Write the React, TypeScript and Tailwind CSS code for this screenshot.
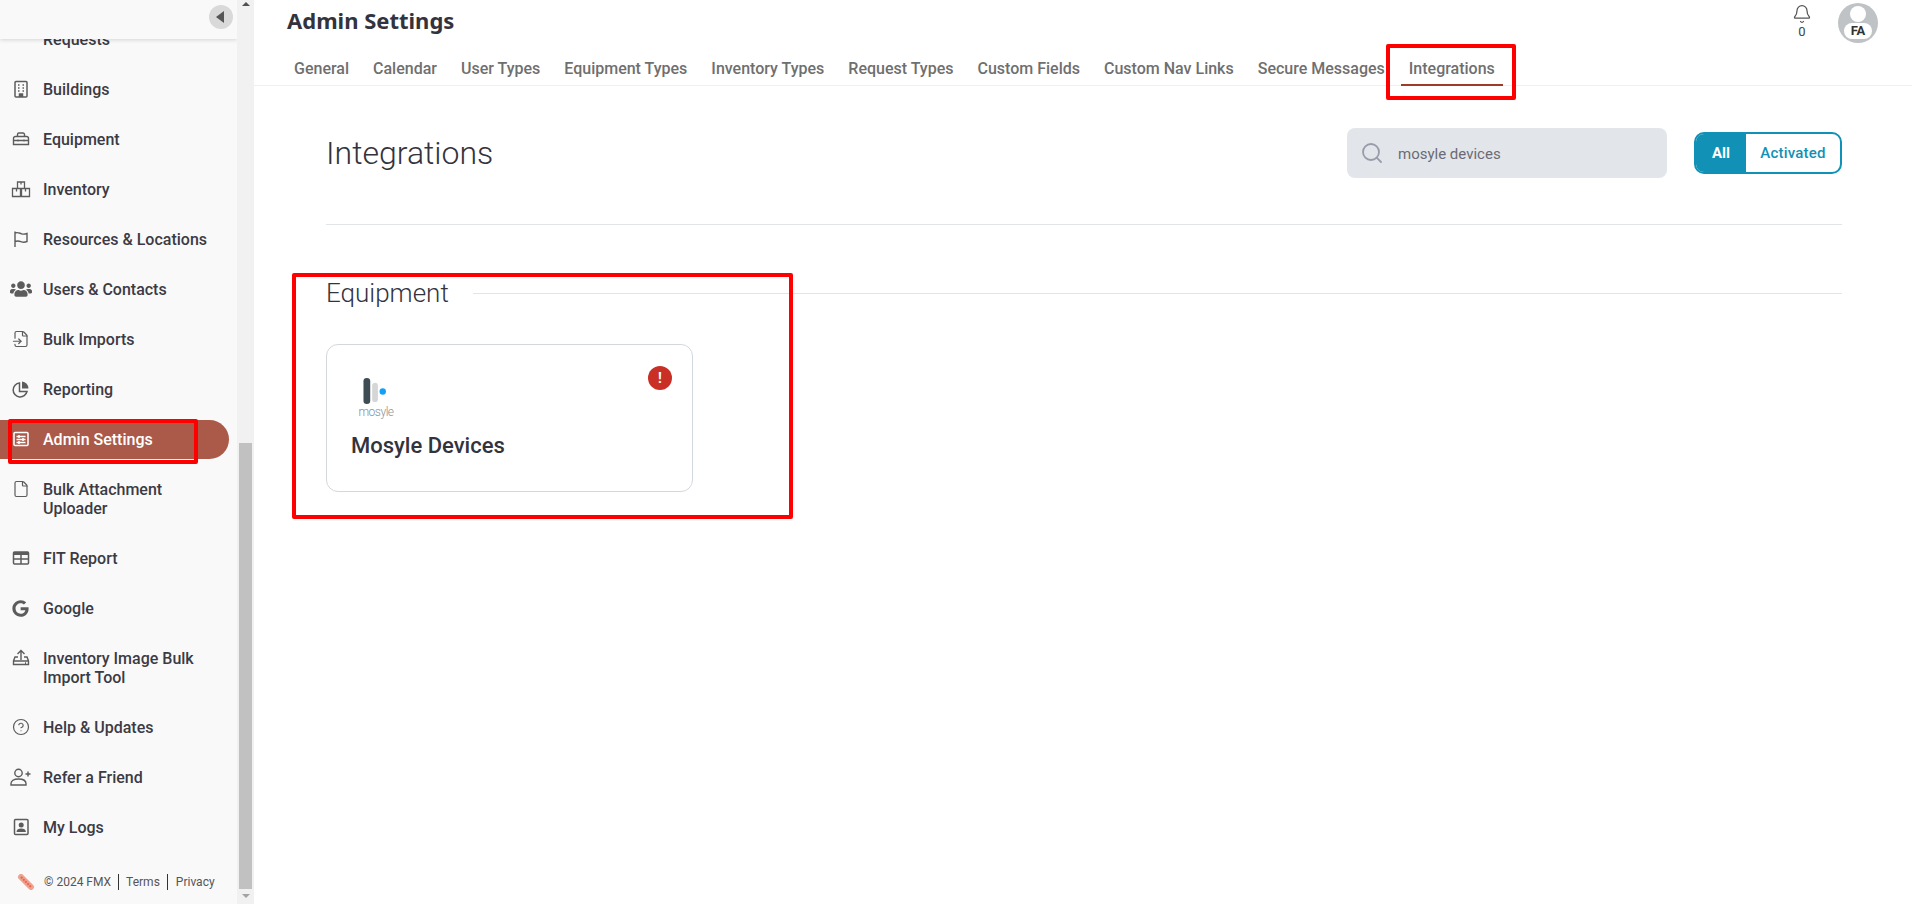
import { Bell, CircleHelp, File, FileInput, Search } from 'lucide-react'
import { FaGoogle, FaUsers } from 'react-icons/fa'
import type { ReactNode } from 'react'

const iconClass = 'h-[18px] w-[18px]'

function BuildingIcon() {
  return (
    <svg viewBox="0 0 18 18" fill="none" stroke="currentColor" strokeWidth="1.5" className={iconClass}>
      <rect x="3" y="1.500" width="12" height="15.500" rx="1" />
      <path d="M6 5h1.500M10.500 5H12M6 8h1.500M10.500 8H12M6 11h1.500M10.500 11H12" strokeWidth="1.600" />
      <path d="M7.500 17v-3h3v3" fill="currentColor" />
    </svg>
  )
}

function Toolbox() {
  return (
    <svg viewBox="0 0 18 18" fill="none" stroke="currentColor" strokeWidth="1.4" className={iconClass}>
      <path d="M1.500 8.500a2 2 0 0 1 2-2h11a2 2 0 0 1 2 2v6h-15z" />
      <path d="M5.500 6.500V4.500A1.500 1.500 0 0 1 7 3h4a1.500 1.500 0 0 1 1.500 1.500v2M1.500 10.500h15M6 9.500v2M12 9.500v2" />
    </svg>
  )
}

function Boxes() {
  return (
    <svg viewBox="0 0 20 20" fill="none" stroke="currentColor" strokeWidth="1.300" className="h-5 w-5">
      <path d="M6.500 9V3h7v6M10 3v2.500" />
      <path d="M1.500 9.500h8v8h-8zM10.500 9.500h8v8h-8zM5.500 9.500v3M14.500 9.500v3" />
    </svg>
  )
}

function FlagIcon() {
  return (
    <svg viewBox="0 0 18 18" fill="none" stroke="currentColor" strokeWidth="1.400" className={iconClass}>
      <path d="M3 1.500V17M3 3c3-1 4 0 6.500.8 2 .6 3.500.3 5.500-.3v8c-2 .8-3.500 1-5.500.3C7 11 6 10.500 3 11.500" />
    </svg>
  )
}

function PieIcon() {
  return (
    <svg viewBox="0 0 18 18" fill="none" stroke="currentColor" strokeWidth="1.500" className={iconClass}>
      <path d="M7.500 3a7 7 0 1 0 7.500 8.500H7.500z" />
      <path d="M10 1.500a7 7 0 0 1 6.500 7H10z" fill="currentColor" stroke="none" />
    </svg>
  )
}

function Sliders() {
  return (
    <svg viewBox="0 0 18 18" fill="none" stroke="currentColor" strokeWidth="1.500" className={iconClass}>
      <rect x="2" y="2.500" width="14" height="13" rx="1" />
      <path d="M4.500 6.500h9M4.500 9.500h9M4.500 12.500h9M7 5v3M11 8v3M7 11v3" />
    </svg>
  )
}

function TableIcon() {
  return (
    <svg viewBox="0 0 18 18" fill="none" stroke="currentColor" strokeWidth="1.500" className={iconClass}>
      <rect x="1.500" y="3" width="15" height="12" rx="1" />
      <path d="M1.500 4.500h15" strokeWidth="3" />
      <path d="M1.500 10h15M9 6v9" />
    </svg>
  )
}

function TrayUpload() {
  return (
    <svg viewBox="0 0 18 18" fill="none" stroke="currentColor" strokeWidth="1.400" className={iconClass}>
      <path d="M9 11V2M5.500 5 9 1.500 12.500 5" />
      <path d="M6 8H3L1.500 12v3.500h15V12L15 8h-3M1.500 12h15M13 14h1" />
    </svg>
  )
}

function ReferIcon() {
  return (
    <svg viewBox="0 0 22 18" fill="none" stroke="currentColor" strokeWidth="1.400" className="h-[18px] w-[22px]">
      <circle cx="8.500" cy="5" r="3.700" />
      <path d="M1 17v-1.500c0-2.500 2.500-4.500 7.500-4.500s7.500 2 7.500 4.500V17z" />
      <path d="M18 3.500v5M15.500 6h5" />
    </svg>
  )
}

function LogsIcon() {
  return (
    <svg viewBox="0 0 18 18" fill="none" stroke="currentColor" strokeWidth="1.500" className={iconClass}>
      <rect x="2.500" y="1.500" width="13.500" height="15" rx="1" />
      <circle cx="9.200" cy="7" r="2.500" fill="currentColor" stroke="none" />
      <path d="M4.500 14c0-2.500 2-3.500 4.700-3.500s4.700 1 4.700 3.500z" fill="currentColor" stroke="none" />
    </svg>
  )
}

function Feather() {
  return (
    <svg viewBox="0 0 18 16" className="h-4 w-[18px]">
      <path d="M4 3 14 13" stroke="#eca48f" strokeWidth="6" strokeLinecap="round" />
      <path d="M4 3 14 13" stroke="#ef5f50" strokeWidth="2" strokeDasharray="2 1" />
    </svg>
  )
}

type NavItem = { label: ReactNode; icon: ReactNode; tall?: boolean; active?: boolean }

const navItems: NavItem[] = [
  { label: <>Work<br />Requests</>, icon: null, tall: true },
  { label: 'Buildings', icon: <BuildingIcon /> },
  { label: 'Equipment', icon: <Toolbox /> },
  { label: 'Inventory', icon: <Boxes /> },
  { label: 'Resources & Locations', icon: <FlagIcon /> },
  { label: 'Users & Contacts', icon: <FaUsers className="h-[22px] w-[22px]" /> },
  { label: 'Bulk Imports', icon: <FileInput className={iconClass} strokeWidth={1.6} /> },
  { label: 'Reporting', icon: <PieIcon /> },
  { label: 'Admin Settings', icon: <Sliders />, active: true },
  { label: <>Bulk Attachment<br />Uploader</>, icon: <File className={iconClass} strokeWidth={1.6} />, tall: true },
  { label: 'FIT Report', icon: <TableIcon /> },
  { label: 'Google', icon: <FaGoogle className="h-[17px] w-[17px]" /> },
  { label: <>Inventory Image Bulk<br />Import Tool</>, icon: <TrayUpload />, tall: true },
  { label: 'Help & Updates', icon: <CircleHelp className={iconClass} strokeWidth={1.6} /> },
  { label: 'Refer a Friend', icon: <ReferIcon /> },
  { label: 'My Logs', icon: <LogsIcon /> },
]

const tabs = [
  'General',
  'Calendar',
  'User Types',
  'Equipment Types',
  'Inventory Types',
  'Request Types',
  'Custom Fields',
  'Custom Nav Links',
  'Secure Messages',
  'Integrations',
]

function Sidebar() {
  return (
    <aside className="relative flex h-full w-[237px] shrink-0 flex-col overflow-hidden bg-[#f9f9f9] text-base font-medium leading-[19px] text-[#3b3b45]">
      <div className="relative z-10 flex h-[39px] shrink-0 items-start justify-end bg-[#f9f9f9] pr-[4px] pt-[5px] shadow-[0_1px_4px_rgba(0,0,0,0.15)]">
        <div className="flex h-6 w-6 items-center justify-center rounded-full bg-[#d9d9d9]">
          <div className="mr-[2px] h-0 w-0 border-y-[6px] border-r-[8px] border-y-transparent border-r-[#555]" />
        </div>
      </div>
      <nav className="-mt-[44px] flex-1">
        {navItems.map((item, i) =>
          item.active ? (
            <div key={i} className="my-[5.5px] flex h-[39px] w-[229px] items-center rounded-r-[20px] bg-[#ab5a4a] text-white">
              <span className="flex w-[43px] shrink-0 justify-center pr-[2px]">{item.icon}</span>
              {item.label}
            </div>
          ) : (
            <div key={i} className="flex items-start py-[15.5px]">
              <span className="flex h-[19px] w-[43px] shrink-0 items-center justify-center pr-[2px] text-[#5c5c5c]">{item.icon}</span>
              <span>{item.label}</span>
            </div>
          ),
        )}
      </nav>
      <div className="flex h-[52px] shrink-0 items-center pl-[17px] pt-[8px] text-xs font-normal text-[#555]">
        <Feather />
        <span className="ml-[9px] border-r border-[#333] pr-[7px]">© 2024 FMX</span>
        <span className="border-r border-[#333] px-[7px]">Terms</span>
        <span className="pl-[8px]">Privacy</span>
      </div>
    </aside>
  )
}

function Scrollbar() {
  return (
    <div className="flex h-full w-[17px] shrink-0 flex-col items-center bg-[#f1f1f1] px-[2px]">
      <div className="mt-[2px] h-0 w-0 border-x-[4px] border-b-[4px] border-x-transparent border-b-[#505050]" />
      <div className="mt-[437px] h-[446px] w-full bg-[#c1c1c1]" />
      <div className="mt-[5px] h-0 w-0 border-x-[4px] border-t-[4px] border-x-transparent border-t-[#a3a3a3]" />
    </div>
  )
}

function Header() {
  return (
    <header className="relative h-[86px] shrink-0 border-b border-[#f0f0f0] pl-[33px]">
      <h1 className="pt-[6px] font-['Noto_Sans',sans-serif] text-[22px] font-bold leading-[29px] text-[#33333d]">Admin Settings</h1>
      <div className="mt-[23px] flex gap-2 -ml-[1px]">
        {tabs.map((tab) => (
          <div key={tab} className={`px-2 pb-[4px] text-base font-medium leading-[22px] text-[#6f6f6f] ${tab === 'Integrations' ? 'border-b-2 border-[#9c3c2b]' : ''}`}>
            {tab}
          </div>
        ))}
      </div>
      <div className="absolute right-[100px] top-[4px] flex w-[20px] flex-col items-center text-[#555]">
        <Bell className="h-5 w-5" strokeWidth={1.5} />
        <span className="mt-px text-[13px] leading-[14px] text-[#444]">0</span>
      </div>
      <div className="absolute right-[34px] top-[3px] h-10 w-10 overflow-hidden rounded-full bg-[#bfc3c6]">
        <div className="mx-auto mt-[3px] h-4 w-4 rounded-full bg-white" />
        <div className="absolute left-[6px] top-[20px] flex h-[16px] w-[28px] items-center justify-center rounded-full bg-white text-[13px] font-bold text-[#333]">FA</div>
      </div>
    </header>
  )
}

function Integrations() {
  return (
    <main className="pl-[72px] pr-[70px]">
      <div className="flex h-[139px] items-start border-b border-[#e2e5e8] pt-[42px]">
        <h2 className="flex-1 text-[32px] font-light leading-[50px] text-[#33333d]">Integrations</h2>
        <div className="flex h-[50px] w-[320px] items-center rounded-lg bg-[#e2e6ea] pl-[13px] text-[15px] text-[#6b6b75]">
          <Search className="h-6 w-6 text-[#9a9aaa]" strokeWidth={1.8} />
          <span className="ml-[14px] mt-[2px]">mosyle devices</span>
        </div>
        <div className="ml-[27px] mt-[4px] flex h-[42px] w-[148px] overflow-hidden rounded-[10px] border-2 border-[#1191b5] text-[15px] font-medium">
          <div className="flex w-[50px] items-center justify-center bg-[#1191b5] font-bold text-white">All</div>
          <div className="flex flex-1 items-center justify-center tracking-[0.2px] text-[#1191b5]">Activated</div>
        </div>
      </div>
      <div className="mt-[51px] flex items-center gap-6">
        <h3 className="text-[26px] font-light leading-[34px] text-[#33333d]">Equipment</h3>
        <div className="h-px flex-1 bg-[#e2e5e8]" />
      </div>
      <div className="relative mt-[34px] h-[148px] w-[367px] rounded-xl border border-[#d3d8de] pl-[24px] pt-[33px]">
        <div className="ml-[7px] flex h-[41px] w-[36px] flex-col items-center">
          <svg viewBox="0 0 36 27" className="h-[27px] w-[36px]">
            <rect x="5" y="0" width="7" height="27" rx="3.400" fill="#3e4c54" />
            <rect x="14" y="5" width="6" height="20" rx="3" fill="#d6d6d6" />
            <circle cx="25" cy="14" r="3.300" fill="#10a0f5" />
          </svg>
          <span className="mt-[2px] text-[12px] font-light leading-[13px] tracking-[-0.5px] text-[#8a8f93]">mosyle</span>
        </div>
        <div className="mt-[13px] text-[22px] font-medium leading-[28px] text-[#33333d]">Mosyle Devices</div>
        <div className="absolute right-[20px] top-[21px] flex h-6 w-6 items-center justify-center rounded-full bg-[#c92f24] text-sm font-bold text-white">!</div>
      </div>
    </main>
  )
}

export default function App() {
  return (
    <div className="relative flex h-screen w-full overflow-hidden bg-white font-['Roboto',sans-serif]">
      <Sidebar />
      <Scrollbar />
      <div className="flex min-w-0 flex-1 flex-col">
        <Header />
        <Integrations />
      </div>
      <div className="pointer-events-none absolute left-[8px] top-[419px] h-[45px] w-[190px] rounded-[2px] border-[4px] border-[#ff0000]" />
      <div className="pointer-events-none absolute left-[1386px] top-[44px] h-[56px] w-[130px] rounded-[2px] border-[4px] border-[#ff0000]" />
      <div className="pointer-events-none absolute left-[292px] top-[273px] h-[246px] w-[501px] rounded-[2px] border-[4px] border-[#ff0000]" />
    </div>
  )
}
